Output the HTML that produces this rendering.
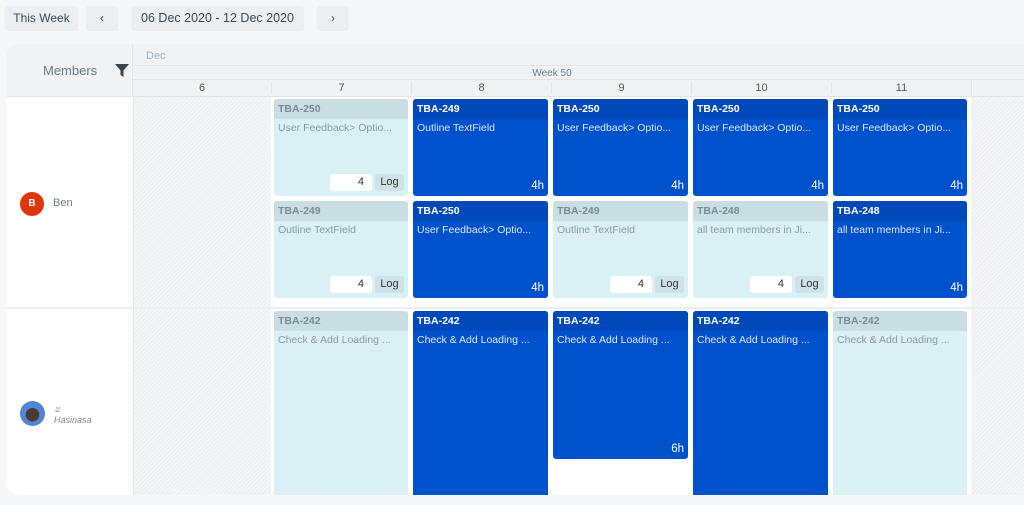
<!DOCTYPE html>
<html><head><meta charset="utf-8"><style>
*{box-sizing:border-box;margin:0;padding:0}
body{width:1024px;height:505px;overflow:hidden;background:#f6f7f9;font-family:"Liberation Sans",sans-serif;position:relative}
.btn{position:absolute;top:6px;height:25px;background:#eceef1;border-radius:3px;color:#3a4a5c;font-size:12px;line-height:25px;text-align:center}
.panel{position:absolute;left:6px;top:44px;width:1030px;height:451px;background:#fff;border-radius:14px 0 0 14px;overflow:hidden}
.hdr{position:absolute;left:0;top:0;width:1030px;height:53px;background:#f1f2f4}
.a{position:absolute}
.hatch{position:absolute;background:repeating-linear-gradient(135deg,#f5f6f8 0 2px,#ebedf0 2px 3px)}
.card{position:absolute;border-radius:3px;overflow:hidden;font-size:10.5px}
.card .h{height:20px;line-height:20px;padding-left:4px;font-weight:bold;font-size:10.5px}
.card .t{padding:3px 4px 0;white-space:nowrap}
.L{background:#d9f0f5}.L .h{background:#c9dee3;color:#7d8b94}.L .t{color:#8d9aa3}
.B{background:#0052cc}.B .h{background:#0049bb;color:#fff}.B .t{color:#dbe6ff}
.hh{position:absolute;right:4px;bottom:4px;color:#fff;font-size:11.5px}
.inp{position:absolute;right:36px;bottom:5px;width:42px;height:17px;background:#fff;border-radius:3px;text-align:right;padding-right:8px;font-size:11px;line-height:17px;color:#333}
.log{position:absolute;right:4px;bottom:5px;width:29px;height:17px;background:#cfe2e7;border-radius:3px;text-align:center;font-size:11px;line-height:17px;color:#333}
</style></head><body>
<div class="btn" style="left:5px;width:73px">This Week</div>
<div class="btn" style="left:86px;width:32px">&#8249;</div>
<div class="btn" style="left:131px;width:173px;font-size:12.5px">06 Dec 2020 - 12 Dec 2020</div>
<div class="btn" style="left:317px;width:32px">&#8250;</div>
<div class="panel">
 <div class="hdr"></div>
 <div class="a" style="left:0;top:0;width:127px;height:53px;background:#f1f2f4;border-right:1px solid #e2e4e8"></div>
 <div class="a" style="left:37px;top:19px;font-size:13px;color:#6b7c8f">Members</div>
 <svg class="a" style="left:109px;top:20px" width="14" height="14" viewBox="0 0 14 14"><path d="M0 0H14L8.5 6.5V13L5.5 11V6.5Z" fill="#3b4450"/></svg>
 <div class="a" style="left:140px;top:6px;font-size:11px;color:#9fb0c2">Dec</div>
 <div class="a" style="left:127px;top:21px;width:903px;border-top:1px solid #e4e6ea"></div>
 <div class="a" style="left:127px;top:24px;width:838px;text-align:center;font-size:10px;color:#6b7c8f">Week 50</div>
 <div class="a" style="left:127px;top:35px;width:903px;border-top:1px solid #e2e4e8"></div>
 <div class="a" style="left:0;top:52px;width:1030px;border-top:1px solid #e2e4e8"></div>
 <div class="a" style="left:127px;top:38px;width:138px;text-align:center;font-size:11px;color:#555">6</div>
 <div class="a" style="left:265px;top:38px;width:140px;text-align:center;font-size:11px;color:#555;border-left:1px solid #e2e4e8">7</div>
 <div class="a" style="left:405px;top:38px;width:140px;text-align:center;font-size:11px;color:#555;border-left:1px solid #e2e4e8">8</div>
 <div class="a" style="left:545px;top:38px;width:140px;text-align:center;font-size:11px;color:#555;border-left:1px solid #e2e4e8">9</div>
 <div class="a" style="left:685px;top:38px;width:140px;text-align:center;font-size:11px;color:#555;border-left:1px solid #e2e4e8">10</div>
 <div class="a" style="left:825px;top:38px;width:140px;text-align:center;font-size:11px;color:#555;border-left:1px solid #e2e4e8">11</div>
 <div class="a" style="left:965px;top:36px;width:70px;height:16px;border-left:1px solid #e2e4e8"></div>
 <div class="a" style="left:127px;top:53px;width:1px;height:400px;background:#e6e8eb"></div>
 <div class="hatch" style="left:128px;top:53px;width:137px;height:400px"></div>
 <div class="hatch" style="left:965px;top:53px;width:70px;height:400px"></div>
 <div class="a" style="left:0;top:263px;width:1030px;height:2px;background:#eceef1"></div>
 <div class="a" style="left:14px;top:148px;width:24px;height:24px;border-radius:50%;background:#de350b;color:#fff;font-size:10px;font-weight:bold;text-align:center;line-height:24px">B</div>
 <div class="a" style="left:47px;top:153px;font-size:11px;color:#6b7c8f">Ben</div>
 <div class="a" style="left:14px;top:357px;width:25px;height:25px;border-radius:50%;background:radial-gradient(circle at 50% 55%,#4a3a30 0 35%,#4f86d8 38%)"></div>
 <div class="a" style="left:48px;top:360px;font-size:9px;font-style:italic;color:#7c8aa0;line-height:11px">ෂ<br>Hasinasa</div>
</div>
<div style="position:absolute;left:0;top:0">
<div class="card L" style="left:274px;top:99px;width:134px;height:97px"><div class="h">TBA-250</div><div class="t">User Feedback&gt; Optio...</div><div class="inp">4</div><div class="log">Log</div></div>
<div class="card L" style="left:274px;top:201px;width:134px;height:97px"><div class="h">TBA-249</div><div class="t">Outline TextField</div><div class="inp">4</div><div class="log">Log</div></div>
<div class="card B" style="left:413px;top:99px;width:135px;height:97px"><div class="h">TBA-249</div><div class="t">Outline TextField</div><div class="hh">4h</div></div>
<div class="card B" style="left:413px;top:201px;width:135px;height:97px"><div class="h">TBA-250</div><div class="t">User Feedback&gt; Optio...</div><div class="hh">4h</div></div>
<div class="card B" style="left:553px;top:99px;width:135px;height:97px"><div class="h">TBA-250</div><div class="t">User Feedback&gt; Optio...</div><div class="hh">4h</div></div>
<div class="card L" style="left:553px;top:201px;width:135px;height:97px"><div class="h">TBA-249</div><div class="t">Outline TextField</div><div class="inp">4</div><div class="log">Log</div></div>
<div class="card B" style="left:693px;top:99px;width:135px;height:97px"><div class="h">TBA-250</div><div class="t">User Feedback&gt; Optio...</div><div class="hh">4h</div></div>
<div class="card L" style="left:693px;top:201px;width:135px;height:97px"><div class="h">TBA-248</div><div class="t">all team members in Ji...</div><div class="inp">4</div><div class="log">Log</div></div>
<div class="card B" style="left:833px;top:99px;width:134px;height:97px"><div class="h">TBA-250</div><div class="t">User Feedback&gt; Optio...</div><div class="hh">4h</div></div>
<div class="card B" style="left:833px;top:201px;width:134px;height:97px"><div class="h">TBA-248</div><div class="t">all team members in Ji...</div><div class="hh">4h</div></div>
<div class="card L" style="left:274px;top:311px;width:134px;height:184px;border-radius:3px 3px 0 0"><div class="h">TBA-242</div><div class="t">Check &amp; Add Loading ...</div></div>
<div class="card B" style="left:413px;top:311px;width:135px;height:184px;border-radius:3px 3px 0 0"><div class="h">TBA-242</div><div class="t">Check &amp; Add Loading ...</div></div>
<div class="card B" style="left:553px;top:311px;width:135px;height:148px"><div class="h">TBA-242</div><div class="t">Check &amp; Add Loading ...</div><div class="hh">6h</div></div>
<div class="card B" style="left:693px;top:311px;width:135px;height:184px;border-radius:3px 3px 0 0"><div class="h">TBA-242</div><div class="t">Check &amp; Add Loading ...</div></div>
<div class="card L" style="left:833px;top:311px;width:134px;height:184px;border-radius:3px 3px 0 0"><div class="h">TBA-242</div><div class="t">Check &amp; Add Loading ...</div></div>
</div>
</body></html>
